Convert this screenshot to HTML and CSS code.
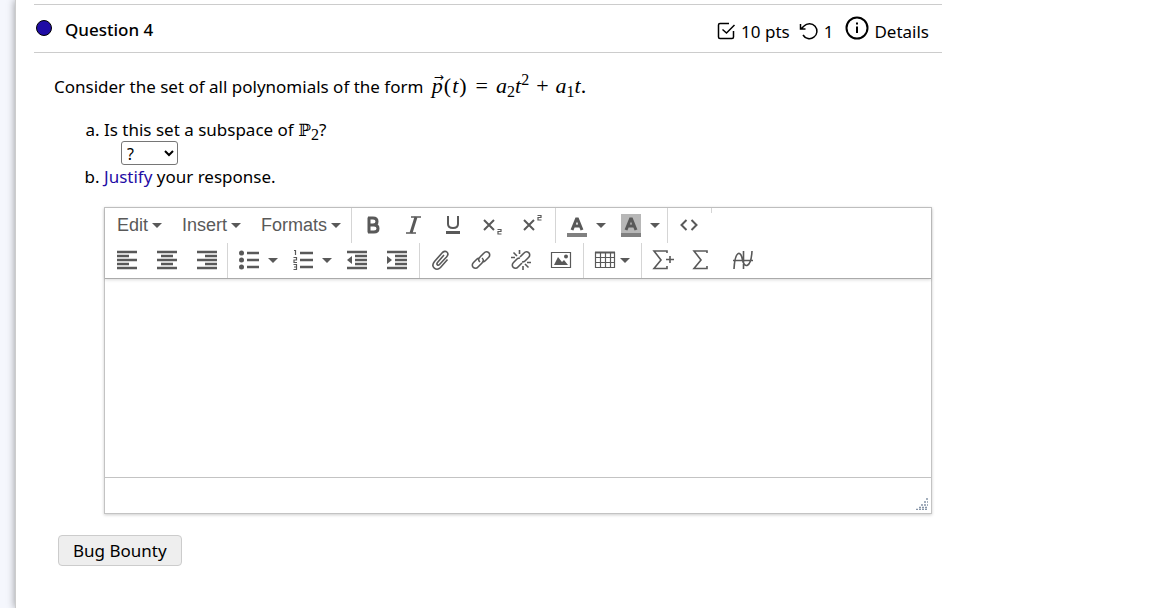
FILE: index.html
```html
<!DOCTYPE html>
<html lang="en">
<head>
    <meta charset="UTF-8">
    <title>Question 4</title>
    <link rel="stylesheet" href="styles.css">
</head>
<body>
<main class="page">
    <section class="question">
        <header class="q-head">
            <span class="dot"></span>
            <h2>Question 4</h2>
            <div class="q-info">
                <svg class="ic-check" width="20" height="20" viewBox="0 0 20 20"><path d="M13 2.500H4Q2.500 2.500 2.500 4V16Q2.500 17.500 4 17.500H16Q17.500 17.500 17.500 16V10M6.500 8.500L10.500 12L18.500 4"/></svg>
                <span>10 pts</span>
                <svg class="ic-undo" width="20" height="20" viewBox="0 0 20 20"><path d="M1.500 3V8H6.500M2 8L5 5A7.500 7.500 0 1 1 4 14"/></svg>
                <span>1</span>
                <button type="button" class="details">
                    <svg width="24" height="24" viewBox="0 0 24 24"><circle cx="12" cy="12" r="10.500"/><path d="M12 10.500V17M12 6.500V8.500"/></svg>
                    <span>Details</span>
                </button>
            </div>
        </header>
        <div class="q-body">
            <p>Consider the set of all polynomials of the form <span class="math"><i class="vec">p</i><span class="paren">(</span><i>t</i><span class="paren">)</span><span class="op">=</span><i>a</i><sub>2</sub><i>t</i><sup>2</sup><span class="plus">+</span><i>a</i><sub>1</sub><i>t</i>.</span></p>
            <ol>
                <li><label for="answer">Is this set a subspace of <span class="math"><span class="bb">ℙ</span><sub>2</sub></span>?</label>
                    <div class="pick">
                        <select id="answer">
                            <option>?</option>
                            <option>Yes</option>
                            <option>No</option>
                        </select>
                    </div>
                </li>
                <li><a href="#response">Justify</a> your response.
                    <div class="editor">
                        <div class="tools">
                            <div class="row">
                                <div class="group">
                                    <button type="button" class="menu">Edit<i class="caret"></i></button>
                                    <button type="button" class="menu">Insert<i class="caret"></i></button>
                                    <button type="button" class="menu">Formats<i class="caret"></i></button>
                                </div>
                                <div class="group">
                                    <button type="button" aria-label="Bold"><svg viewBox="0 0 20 20"><path class="l3" d="M6 2.500V17.500M5 3H10Q14 3 14 6.500T10 10H6H11Q15 10 15 13.500T11 17H5"/></svg></button>
                                    <button type="button" aria-label="Italic"><svg viewBox="0 0 20 20"><path class="l3" d="M13 2L8 18"/><path d="M8 2H18M3 18H13"/></svg></button>
                                    <button type="button" aria-label="Underline"><svg viewBox="0 0 20 20"><path class="l2" d="M5 1V9Q5 13 10 13T15 9V1"/><path class="l3" d="M3 17.500H17"/></svg></button>
                                    <button type="button" aria-label="Subscript"><svg viewBox="0 0 20 20"><path class="l2" d="M1 5L11 15M11 5L1 15"/><path class="thin" d="M14.500 14.500H18V16.500H15V19H18.500"/></svg></button>
                                    <button type="button" aria-label="Superscript"><svg viewBox="0 0 20 20"><path class="l2" d="M1 5L11 15M11 5L1 15"/><path class="thin" d="M14.500 .5H18V2.500H15V5H18.500"/></svg></button>
                                </div>
                                <div class="group">
                                    <button type="button" class="split" aria-label="Text color"><svg viewBox="0 0 20 24"><path class="l3" d="M5 17L9.500 6H10.500L15 17M7 13H13"/><path class="bar" d="M0 20H20V24H0Z"/></svg><i class="caret"></i></button>
                                    <button type="button" class="split" aria-label="Background color"><svg viewBox="0 0 20 24"><path class="shade" d="M0 1H20V20H0Z"/><path class="l3" d="M5 17L9.500 6H10.500L15 17M7 13H13"/><path class="bar" d="M0 20H20V24H0Z"/></svg><i class="caret"></i></button>
                                </div>
                                <div class="group">
                                    <button type="button" aria-label="Source code"><svg viewBox="0 0 20 20"><path class="l2" d="M7.500 5L2.500 10L7.500 15M12.500 5L17.500 10L12.500 15"/></svg></button>
                                </div>
                                <div class="group stub"></div>
                            </div>
                            <div class="row">
                                <div class="group">
                                    <button type="button" aria-label="Align left"><svg viewBox="0 0 20 20"><path class="lines" d="M0 2H20M0 6H12M0 10H20M0 14H12M0 18H20"/></svg></button>
                                    <button type="button" aria-label="Align center"><svg viewBox="0 0 20 20"><path class="lines" d="M0 2H20M4 6H16M0 10H20M4 14H16M0 18H20"/></svg></button>
                                    <button type="button" aria-label="Align right"><svg viewBox="0 0 20 20"><path class="lines" d="M0 2H20M8 6H20M0 10H20M8 14H20M0 18H20"/></svg></button>
                                </div>
                                <div class="group">
                                    <button type="button" class="split" aria-label="Bullet list"><svg viewBox="0 0 20 20"><path class="lines" d="M8 3H20M8 10H20M8 17H20"/><g class="fill"><circle cx="2.500" cy="3" r="2.500"/><circle cx="2.500" cy="10" r="2.500"/><circle cx="2.500" cy="17" r="2.500"/></g></svg><i class="caret"></i></button>
                                    <button type="button" class="split" aria-label="Numbered list"><svg viewBox="0 0 20 20"><path class="lines" d="M7 3H20M7 10H20M7 17H20"/><path class="thin" d="M1 .5H2.500V5M.5 7.500H3.500V10H1V12.500H4M.5 14.500H3.500V19.500H.5M1 17H3.500"/></svg><i class="caret"></i></button>
                                    <button type="button" aria-label="Decrease indent"><svg viewBox="0 0 20 20"><path class="lines" d="M0 2H20M8 6H20M8 10H20M8 14H20M0 18H20"/><path class="fill" d="M5 6V14L0 10Z"/></svg></button>
                                    <button type="button" aria-label="Increase indent"><svg viewBox="0 0 20 20"><path class="lines" d="M0 2H20M8 6H20M8 10H20M8 14H20M0 18H20"/><path class="fill" d="M0 6V14L5 10Z"/></svg></button>
                                </div>
                                <div class="group">
                                    <button type="button" aria-label="Attach file"><svg viewBox="0 0 20 20"><path d="M13 5L6.500 12.500C5 14.500 7 16 8.500 14.500L15.500 7C19 3 14.500-1 11 3L3.500 11.500C-1 17 5.500 21.500 9.500 17.500L16.500 9.500"/></svg></button>
                                    <button type="button" aria-label="Insert link"><svg viewBox="0 0 20 20"><path d="M9 12C6.500 10 8 8 9.500 6.500L13 3C16-.5 21 4 17.500 7.500L14 11C13 12 12 12 11 12M11 8C13.500 10 12 12 10.500 13.500L7 17C4 20.500-1 16 2.500 12.500L6 9C7 8 8 8 9 8"/></svg></button>
                                    <button type="button" aria-label="Remove link"><svg viewBox="0 0 20 20"><path d="M9 7L13 3C16-.5 21 4 17.500 7.500L14 11C13 12 12 12 11 12M11 13L7 17C4 20.500-1 16 2.500 12.500L6 9C7 8 8 8 9 8M2.500 2.500L6 6M8.500 0V4M0 7.500H4M14 14L17.500 17.500M12 16V20M16 12.500H20"/></svg></button>
                                    <button type="button" aria-label="Insert image"><svg viewBox="0 0 20 20"><path class="thin" d="M.5 2.500H19.500V17.500H.5Z"/><path class="fill" d="M3 15L7 7L11 12L13 10L17 15Z"/><circle class="fill" cx="15" cy="6.500" r="2"/></svg></button>
                                </div>
                                <div class="group">
                                    <button type="button" class="split table" aria-label="Table"><svg viewBox="0 0 20 20"><path class="thin" d="M.5 2.500H19.500V17.500H.5ZM.5 7.500H19.500M.5 12.500H19.500M5.500 3V17M10.500 3V17M15.500 3V17"/><path class="l2" d="M0 2.500H20"/></svg><i class="caret"></i></button>
                                </div>
                                <div class="group">
                                    <button type="button" aria-label="Insert math"><svg viewBox="0 0 20 20"><path d="M14 3V1H1L8 10L1 18.500H14V16M13 9.500H21M17 6V13"/></svg></button>
                                    <button type="button" aria-label="Insert symbol"><svg viewBox="0 0 20 20"><path d="M14 3V1H1L8 10L1 18.500H14V16"/></svg></button>
                                    <button type="button" aria-label="Insert graph"><svg viewBox="0 0 20 20"><path d="M1 19C2 0 8 0 9.500 10C11 18 18 19 19 1M0 10.500H20M10.500 1V19"/></svg></button>
                                </div>
                            </div>
                        </div>
                        <textarea id="response" aria-label="Your response"></textarea>
                        <div class="status">
                            <svg width="12" height="12" viewBox="0 0 12 12"><path d="M10 1h2M8 4h4M5 7h7M3 9.500h9M0 11.500h12"/></svg>
                        </div>
                    </div>
                </li>
            </ol>
            <button type="button" class="bounty">Bug Bounty</button>
        </div>
    </section>
</main>
</body>
</html>
```

FILE: styles.css
```css
*{
    box-sizing:border-box;
}
body{
    margin:0;
    background:#f5f7fd;
    color:#000;
    font:17px/23px "Trebuchet MS","Noto Sans",sans-serif;
}
button,select,textarea{
    font:inherit;
    color:inherit;
}
.page{
    min-height:100vh;
    margin-left:15px;
    padding:4px 18px 40px;
    background:#fff;
    border-left:1px solid #ccc;
    box-shadow:0 0 8px rgba(0,0,0,.4);
}
.question{
    max-width:908px;
}
.q-head{
    display:flex;
    align-items:center;
    height:49px;
    border-top:1px solid #ccc;
    border-bottom:1px solid #ccc;
    padding:0 13px 0 2px;
}
.dot{
    width:16px;
    height:16px;
    margin-bottom:2px;
    border:1px solid #000;
    border-radius:50%;
    background:#1f0ca5;
}
h2{
    margin:0 auto 0 13px;
    padding-top:2px;
    font-size:17px;
    font-weight:500;
}
.q-info,.details{
    display:flex;
    align-items:center;
}
.q-info svg{
    fill:none;
    stroke:#000;
    stroke-width:2;
}
.q-info .ic-check,.q-info .ic-undo{
    stroke-width:1.5;
}
.q-info{
    gap:5px;
    padding-top:5px;
}
.ic-undo{
    margin-left:4px;
}
.details{
    gap:5px;
    margin-left:7px;
    padding:0;
    border:0;
    background:none;
}
.details svg{
    margin-bottom:6px;
}
.q-body{
    padding:22px 10px 0 20px;
}
p{
    margin:0;
    line-height:24px;
}
.math{
    font-family:"Liberation Serif",serif;
    font-size:22px;
    line-height:20px;
}
p .math{
    margin-left:4px;
}
.math sub,.math sup{
    font-size:16px;
    line-height:0;
}
.math sub{
    vertical-align:-4px;
}
.math sup{
    vertical-align:8px;
}
.vec{
    position:relative;
}
.vec:before{
    content:"→";
    position:absolute;
    left:2px;
    top:-6px;
    font:12px/20px "DejaVu Sans",sans-serif;
}
.paren{
    margin:0 1px;
}
.op{
    margin:0 8px;
}
.plus{
    margin:0 7px;
}
.bb{
    font-family:"DejaVu Serif","DejaVu Sans",serif;
    font-size:17px;
}
ol{
    list-style:lower-alpha;
    margin:19px 0 21px;
    padding-left:50px;
}
a{
    color:#1f0ca5;
    text-decoration:none;
}
.pick{
    display:flex;
    padding-left:17px;
}
select{
    width:57px;
    height:24px;
    padding:0 0 0 1px;
    border:1px solid #767676;
    border-radius:3px;
    background:#fff;
    font-size:16px;
}
.editor{
    margin-top:19px;
    border:1px solid #c3c3c3;
    box-shadow:0 1px 3px rgba(0,0,0,.2);
    font-family:"Liberation Sans",Arial,sans-serif;
}
.tools{
    border-bottom:1px solid #aaa;
    box-shadow:0 1px 3px rgba(0,0,0,.15);
}
.row,.group{
    display:flex;
    flex-wrap:wrap;
}
.group{
    min-height:35px;
    padding:0 2px 0 1px;
    border-left:1px solid #d5d5d5;
}
.group:first-child{
    padding:0 0 0 2px;
    border:0;
}
.row .stub{
    min-height:5px;
    height:5px;
}
.tools button{
    display:flex;
    align-items:center;
    justify-content:center;
    width:40px;
    height:34px;
    padding:0;
    border:0;
    background:none;
    color:#595959;
}
.tools .menu{
    width:auto;
    padding:0 10px;
    gap:4px;
    font-size:18px;
}
.tools .split{
    width:54px;
    padding-left:5px;
    gap:9px;
}
.tools .table{
    padding:0;
    gap:5px;
}
.tools svg{
    width:20px;
    height:20px;
    flex:none;
    overflow:visible;
    fill:none;
    stroke:#595959;
    stroke-width:1.6;
}
.tools svg[viewBox="0 0 20 24"]{
    height:24px;
}
.tools .l2{
    stroke-width:2;
}
.tools .l3{
    stroke-width:3;
}
.tools .lines{
    stroke-width:2.7;
}
.tools .thin{
    stroke-width:1.2;
}
.tools .fill{
    fill:#595959;
    stroke:none;
}
.tools .bar{
    fill:#808080;
    stroke:none;
}
.tools .shade{
    fill:#b7b7b7;
    stroke:none;
}
.caret{
    border:5px solid transparent;
    border-top-color:#595959;
    border-bottom:0;
}
textarea{
    display:block;
    width:100%;
    height:198px;
    padding:8px;
    border:0;
    outline:0;
    resize:none;
    background:transparent;
}
.status{
    display:flex;
    justify-content:flex-end;
    align-items:flex-end;
    height:36px;
    padding:3px;
    border-top:1px solid #c3c3c3;
}
.status svg{
    fill:none;
    stroke:#8795a8;
    stroke-width:1.5;
    stroke-dasharray:2 1;
}
.bounty{
    height:31px;
    margin-left:4px;
    padding:0 14px;
    border:1px solid #ccc;
    border-radius:4px;
    background:#eee;
}
```
